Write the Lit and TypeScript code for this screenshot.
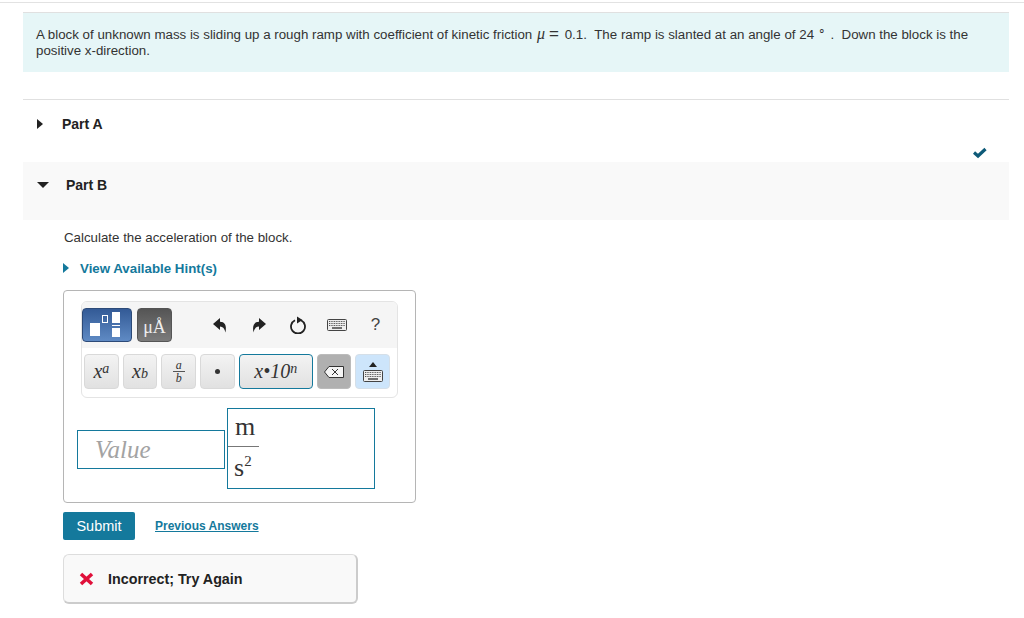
import { LitElement, html, css } from 'lit';
import { customElement } from 'lit/decorators.js';

const keyboard = html`<svg width="20" height="12" viewBox="0 0 20 12">
  <rect x="0.5" y="0.5" width="19" height="11" rx="1" fill="#eee" stroke="#444"/>
  <path d="M2 2.5h16M2 4.5h16M2 6.5h16" stroke="#555" stroke-width="1" stroke-dasharray="1 .7"/>
  <path d="M5 9h10" stroke="#444" stroke-width="1.4"/>
</svg>`;

@customElement('app-root')
export class AppRoot extends LitElement {
  static styles = css`
    :host {
      display: block;
      position: relative;
      width: 1024px;
      height: 618px;
      overflow: hidden;
      background: #fff;
      font-family: "Liberation Sans", Arial, sans-serif;
      font-size: 13.3px;
      color: #333;
    }
    .topline {
      height: 1px;
      margin-top: 2px;
      background: #e2e2e2;
    }
    .intro {
      margin: 9px 15px 0 23px;
      height: 60px;
      box-sizing: border-box;
      background: #e6f6f7;
      border-top: 1px solid #e0e0e0;
      padding: 14px 13px 0;
      font-size: 13.32px;
      line-height: 16px;
      white-space: nowrap;
    }
    .mu {
      font-family: "Liberation Serif", serif;
      font-style: italic;
      font-size: 16px;
      line-height: 0;
      margin: 0 3px 0 1px;
    }
    .eq {
      font-size: 17px;
      line-height: 0;
      margin: 0 2px 0 1px;
    }
    .deg {
      font-size: 12px;
      line-height: 0;
      position: relative;
      top: -4px;
      margin: 0 1px 0 0;
    }
    .divider {
      margin: 27px 15px 0 23px;
      height: 1px;
      background: #e0e0e0;
    }
    .part-a {
      display: flex;
      align-items: center;
      height: 48px;
      margin-left: 37px;
      font-size: 14px;
      font-weight: bold;
      color: #222;
    }
    .tri-right {
      width: 0;
      height: 0;
      border-left: 6px solid #222;
      border-top: 5px solid transparent;
      border-bottom: 5px solid transparent;
      margin-right: 19px;
    }
    .part-b {
      display: flex;
      align-items: center;
      height: 58px;
      margin: 14px 15px 0 23px;
      padding: 0 0 12px 14px;
      box-sizing: border-box;
      background: #f9f9f9;
      font-size: 14px;
      font-weight: bold;
      color: #222;
    }
    .tri-down {
      width: 0;
      height: 0;
      border-top: 6px solid #222;
      border-left: 6px solid transparent;
      border-right: 6px solid transparent;
      margin-right: 17px;
    }
    .check {
      position: absolute;
      left: 973px;
      top: 147px;
    }
    .body {
      margin-left: 63px;
    }
    .question {
      margin: 10px 0 0 1px;
      line-height: 16px;
    }
    .hint {
      display: flex;
      align-items: center;
      margin-top: 14px;
      height: 16px;
      color: #14799c;
      font-weight: bold;
    }
    .hint i {
      width: 0;
      height: 0;
      border-left: 6px solid #14799c;
      border-top: 5px solid transparent;
      border-bottom: 5px solid transparent;
      margin-right: 11px;
    }
    .panel {
      width: 353px;
      height: 213px;
      box-sizing: border-box;
      margin-top: 14px;
      border: 1px solid #b5b5b5;
      border-radius: 4px;
      padding: 10px 0 0 17px;
    }
    .toolbar {
      width: 317px;
      height: 97px;
      box-sizing: border-box;
      border: 1px solid #e4e4e4;
      border-radius: 6px;
      overflow: hidden;
    }
    .row1 {
      display: flex;
      align-items: center;
      height: 46px;
      background: #f5f5f5;
    }
    .tpl {
      width: 50px;
      height: 34px;
      border-radius: 4px;
      border: 1px solid #2c4a78;
      box-sizing: border-box;
      background: linear-gradient(#335a96, #5f8ac4);
      display: flex;
      align-items: center;
      justify-content: center;
    }
    .sym {
      width: 35px;
      height: 34px;
      margin-left: 5px;
      border-radius: 4px;
      border: 1px solid #555;
      box-sizing: border-box;
      background: linear-gradient(#555, #7b7b7b);
      color: #eee;
      font-family: "Liberation Serif", serif;
      font-size: 18px;
      text-align: center;
      line-height: 37px;
    }
    .tools {
      display: flex;
      align-items: center;
      margin-left: 28px;
    }
    .tool {
      width: 39px;
      display: flex;
      justify-content: center;
      align-items: center;
    }
    .help {
      font-size: 17px;
      color: #444;
    }
    .row2 {
      display: flex;
      gap: 4px;
      padding: 6px 0 0 2px;
    }
    .key {
      width: 34.7px;
      height: 35px;
      box-sizing: border-box;
      border: 1px solid #d9d9d9;
      border-radius: 4px;
      background: linear-gradient(#f3f3f3, #e1e1e1);
      display: flex;
      align-items: center;
      justify-content: center;
      font-family: "Liberation Serif", serif;
      font-style: italic;
      font-size: 20px;
      color: #333;
    }
    .key sup {
      font-size: 14px;
      line-height: 0;
      position: relative;
      top: -3px;
    }
    .key sub {
      font-size: 14px;
      line-height: 0;
      position: relative;
      top: 2px;
    }
    .frac {
      display: flex;
      flex-direction: column;
      align-items: center;
      font-size: 12px;
      line-height: 12px;
    }
    .frac b {
      display: block;
      width: 12px;
      height: 1px;
      background: #555;
    }
    .dot {
      width: 5px;
      height: 5px;
      border-radius: 50%;
      background: #333;
    }
    .times {
      width: 74px;
      border: 1px solid #14799c;
    }
    .del {
      background: #b0b0b0;
      border-color: #bbb;
    }
    .kb {
      background: #cde5fb;
      flex-direction: column;
      gap: 3px;
      border-color: #d5dfe8;
    }
    .caret {
      width: 0;
      height: 0;
      border-bottom: 5px solid #222;
      border-left: 4px solid transparent;
      border-right: 4px solid transparent;
    }
    .answer {
      display: flex;
      align-items: center;
      margin: 10px 0 0 -4px;
    }
    .value {
      width: 148px;
      height: 39px;
      box-sizing: border-box;
      border: 1px solid #14799c;
      margin: 2px 2px 0 0;
      padding-left: 17px;
      font-family: "Liberation Serif", serif;
      font-style: italic;
      font-size: 25px;
      line-height: 38px;
      color: #a3a3a3;
    }
    .unit {
      width: 148px;
      height: 81px;
      box-sizing: border-box;
      border: 1px solid #14799c;
      font-family: "Liberation Serif", serif;
      font-size: 26px;
      color: #333;
    }
    .unit-frac {
      width: 31px;
      text-align: center;
    }
    .unit-top {
      height: 38px;
      line-height: 36px;
      padding-left: 3px;
      box-sizing: border-box;
      border-bottom: 1px solid #777;
    }
    .unit-bottom {
      line-height: 42px;
      text-align: left;
      padding-left: 6px;
    }
    .unit-bottom sup {
      font-size: 15px;
      line-height: 0;
    }
    .actions {
      display: flex;
      align-items: center;
      margin-top: 9px;
    }
    .submit {
      width: 72px;
      height: 28px;
      border-radius: 2px;
      background: #14799c;
      color: #fff;
      font-size: 14.5px;
      line-height: 28px;
      text-align: center;
    }
    .prev {
      margin-left: 20px;
      color: #14799c;
      font-size: 12px;
      font-weight: bold;
      text-decoration: underline;
    }
    .feedback {
      display: flex;
      align-items: center;
      width: 295px;
      height: 50px;
      box-sizing: border-box;
      margin-top: 14px;
      padding-left: 15px;
      border: 1px solid #ddd;
      border-bottom: 2px solid #ccc;
      border-right: 2px solid #ccc;
      border-radius: 6px;
      background: #f9f9f9;
      font-size: 14.3px;
      font-weight: bold;
      color: #222;
    }
    .feedback svg {
      margin-right: 14px;
    }
  `;

  render() {
    return html`
      <div class="topline"></div>
      <div class="intro">
        <div>A block of unknown mass is sliding up a rough ramp with coefficient of kinetic friction <span class="mu">μ</span><span class="eq">=</span> 0.1.&nbsp; The ramp is slanted at an angle of 24 <span class="deg">∘</span> .&nbsp; Down the block is the</div>
        <div>positive x-direction.</div>
      </div>
      <div class="divider"></div>
      <div class="part-a"><i class="tri-right"></i>Part A</div>
      <div class="part-b"><i class="tri-down"></i>Part B</div>
      <svg class="check" width="15" height="12" viewBox="0 0 15 12">
        <path d="M1 5.5 L5 9 L12.5 2" fill="none" stroke="#0e5a78" stroke-width="3.2"/>
      </svg>
      <div class="body">
        <div class="question">Calculate the acceleration of the block.</div>
        <div class="hint"><i></i>View Available Hint(s)</div>
        <div class="panel">
          <div class="toolbar">
            <div class="row1">
              <div class="tpl">
                <svg width="38" height="28" viewBox="0 0 38 28">
                  <rect x="2" y="12" width="10" height="13" fill="#fff"/>
                  <rect x="14.5" y="4.5" width="5" height="7" fill="none" stroke="#fff"/>
                  <rect x="24" y="1" width="8" height="11" fill="#fff"/>
                  <rect x="24" y="14" width="8" height="1" fill="#fff"/>
                  <rect x="24" y="17" width="8" height="9" fill="#fff"/>
                </svg>
              </div>
              <div class="sym">μÅ</div>
              <div class="tools">
                <div class="tool">
                  <svg width="14" height="15" viewBox="0 0 14 15">
                    <path d="M0 6 L7 0 V3.8 C11.5 3.8 14 7 12.5 14.5 C11.5 10.5 10 8.5 7 8.5 V12Z" fill="#222"/>
                  </svg>
                </div>
                <div class="tool">
                  <svg width="14" height="15" viewBox="0 0 14 15">
                    <path d="M14 6 L7 0 V3.8 C2.5 3.8 0 7 1.5 14.5 C2.5 10.5 4 8.5 7 8.5 V12Z" fill="#222"/>
                  </svg>
                </div>
                <div class="tool">
                  <svg width="18" height="18" viewBox="0 0 18 18">
                    <path d="M6 4.2 A7 7 0 1 0 12 4.2" fill="none" stroke="#222" stroke-width="1.8"/>
                    <path d="M8 0.5 L13.5 4 L8 7.5Z" fill="#222"/>
                  </svg>
                </div>
                <div class="tool">${keyboard}</div>
                <div class="tool help">?</div>
              </div>
            </div>
            <div class="row2">
              <div class="key">x<sup>a</sup></div>
              <div class="key">x<sub>b</sub></div>
              <div class="key"><div class="frac">a<b></b>b</div></div>
              <div class="key"><i class="dot"></i></div>
              <div class="key times">x•10<sup>n</sup></div>
              <div class="key del">
                <svg width="20" height="12" viewBox="0 0 20 12">
                  <path d="M5 0.5 H19.5 V11.5 H5 L0.5 6Z" fill="#f5f5f5" stroke="#333"/>
                  <path d="M8 3 L14 9 M14 3 L8 9" stroke="#333"/>
                </svg>
              </div>
              <div class="key kb"><i class="caret"></i>${keyboard}</div>
            </div>
          </div>
          <div class="answer">
            <div class="value">Value</div>
            <div class="unit">
              <div class="unit-frac">
                <div class="unit-top">m</div>
                <div class="unit-bottom">s<sup>2</sup></div>
              </div>
            </div>
          </div>
        </div>
        <div class="actions">
          <div class="submit">Submit</div>
          <div class="prev">Previous Answers</div>
        </div>
        <div class="feedback">
          <svg width="15" height="14" viewBox="0 0 15 14">
            <path d="M2 2 L13 12 M13 2 L2 12" stroke="#e0103a" stroke-width="3.6"/>
          </svg>
          Incorrect; Try Again
        </div>
      </div>
    `;
  }
}
